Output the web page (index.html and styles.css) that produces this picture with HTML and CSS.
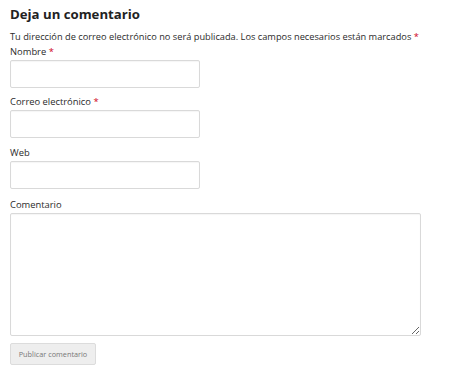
FILE: index.html
```html
<!DOCTYPE html>
<html lang="es">
<head>
<meta charset="utf-8">
<title>Deja un comentario</title>
<link rel="stylesheet" href="styles.css">
</head>
<body>
<div class="respond">
  <h3 class="title">Deja un comentario</h3>
  <form class="form">
    <p class="notes">Tu dirección de correo electrónico no será publicada. Los campos necesarios están marcados <span class="req">*</span></p>
    <div class="field field-first">
      <label class="label" for="author">Nombre <span class="req">*</span></label>
      <input class="input" id="author" type="text">
    </div>
    <div class="field">
      <label class="label" for="email">Correo electrónico <span class="req">*</span></label>
      <input class="input" id="email" type="text">
    </div>
    <div class="field field-url">
      <label class="label" for="url">Web</label>
      <input class="input" id="url" type="text">
    </div>
    <div class="field field-comment">
      <label class="label" for="comment">Comentario</label>
      <textarea class="textarea" id="comment"></textarea>
    </div>
    <div class="submit-row">
      <button class="submit" type="button">Publicar comentario</button>
    </div>
  </form>
</div>
</body>
</html>
```
FILE: styles.css
```css
html, body {
  margin: 0;
  padding: 0;
  background: #ffffff;
}
body {
  font-family: "Open Sans", "Liberation Sans", sans-serif;
  color: #2b2b2b;
}
.respond {
  padding: 5px 10px 0 10px;
}
.title {
  margin: 0;
  font-size: 13.2px;
  font-weight: 700;
  line-height: 18px;
  color: #222222;
}
.form {
  display: flex;
  flex-direction: column;
  margin-top: 7px;
}
.notes {
  margin: 0;
  font-size: 9.25px;
  line-height: 14px;
}
.req {
  color: #d0021b;
}
.field {
  display: flex;
  flex-direction: column;
  margin-top: 6px;
}
.field-first {
  margin-top: 0;
}
.field-url {
  margin-top: 7px;
}
.field-comment {
  margin-top: 8px;
}
.label {
  font-size: 9.4px;
  line-height: 16px;
}
.input {
  box-sizing: border-box;
  width: 190px;
  height: 28px;
  margin: 0;
  border: 1px solid #d9d9d9;
  border-radius: 2px;
  background: #ffffff;
  box-shadow: inset 0 1px 1px rgba(0,0,0,0.04);
  font-family: inherit;
}
.textarea {
  box-sizing: border-box;
  width: 411px;
  height: 123px;
  margin: 0;
  border: 1px solid #d9d9d9;
  border-radius: 2px;
  background: #ffffff;
  box-shadow: inset 0 1px 1px rgba(0,0,0,0.04);
  font-family: inherit;
  resize: both;
  display: block;
}
.submit-row {
  display: flex;
  margin-top: 7px;
}
.submit {
  box-sizing: border-box;
  width: 86px;
  height: 22px;
  padding: 0;
  border: 1px solid #dcdcdc;
  border-radius: 2px;
  background: #eeeeee;
  color: #777777;
  font-family: "Open Sans", "Liberation Sans", sans-serif;
  font-size: 7.3px;
}
```
